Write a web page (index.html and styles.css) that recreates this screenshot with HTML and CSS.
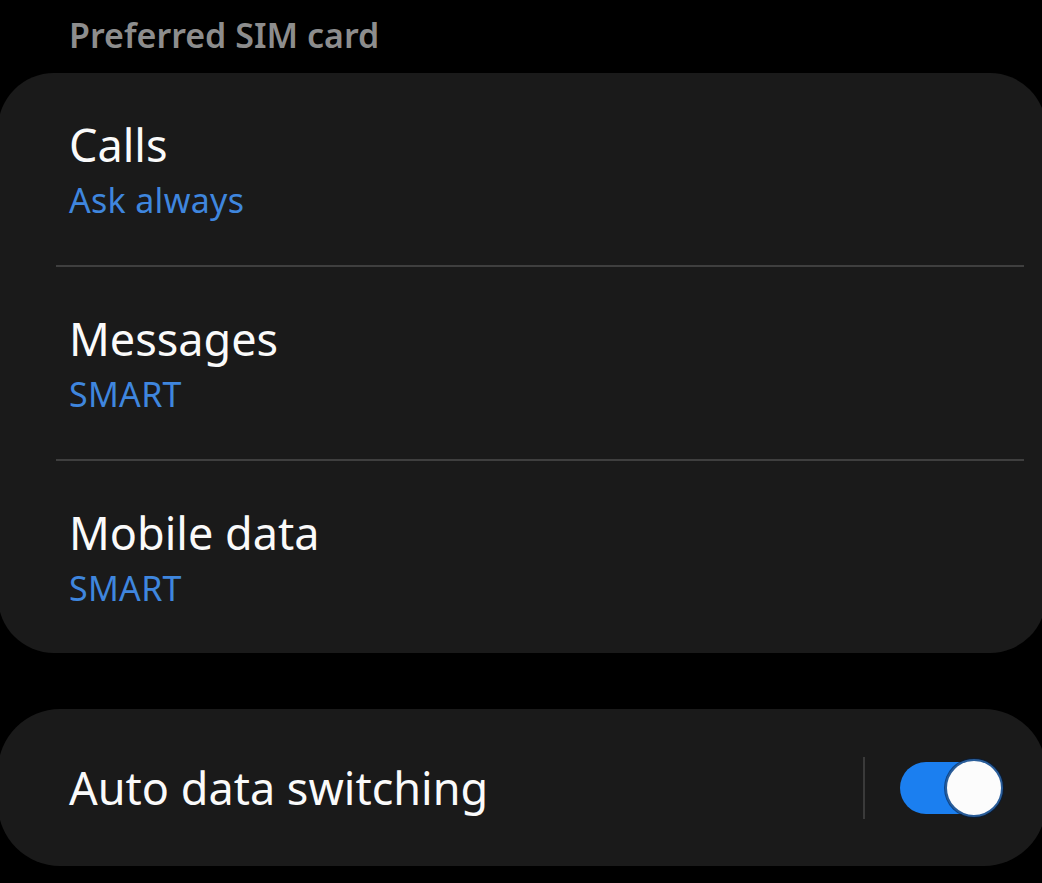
FILE: index.html
```html
<!DOCTYPE html>
<html>
<head>
    <title>SIM card manager</title>
    <meta charset="UTF-8">
    <meta name="viewport" content="width=device-width, initial-scale=1.0">
    <link rel="stylesheet" href="styles.css">
</head>
<body>
    <div class="screen">
        <h2 class="section-title">Preferred SIM card</h2>

        <div class="card">
            <div class="row">
                <div class="row-title">Calls</div>
                <div class="row-value">Ask always</div>
            </div>
            <div class="divider"></div>
            <div class="row">
                <div class="row-title">Messages</div>
                <div class="row-value">SMART</div>
            </div>
            <div class="divider"></div>
            <div class="row">
                <div class="row-title">Mobile data</div>
                <div class="row-value">SMART</div>
            </div>
        </div>

        <div class="card card-switch">
            <div class="row row-switch">
                <div class="row-title">Auto data switching</div>
                <div class="switch-area">
                    <span class="v-sep"></span>
                    <span class="toggle on"><span class="knob"></span></span>
                </div>
            </div>
        </div>
    </div>
</body>
</html>
```

FILE: styles.css
```css
body {
    margin: 0;
    background-color: #000;
    color: #fafafa;
    font-family: 'Noto Sans', 'Roboto', sans-serif;
    overflow: hidden;
}
.screen {
    width: 1042px;
    height: 883px;
    overflow: hidden;
}
.section-title {
    margin: 0;
    padding: 14px 0 0 69px;
    height: 73px;
    box-sizing: border-box;
    font-size: 34px;
    font-weight: 600;
    line-height: 42px;
    color: #8d8d8d;
}
.card {
    margin: 0 -4px 0 -2px;
    background-color: #1a1a1a;
    border-radius: 56px;
}
.row {
    height: 192px;
    padding-left: 71px;
    display: flex;
    flex-direction: column;
    justify-content: center;
}
.row-title {
    font-size: 45px;
    line-height: 56px;
}
.row-value {
    margin-top: 6px;
    font-size: 34px;
    line-height: 42px;
    letter-spacing: 0.3px;
    color: #3f86de;
}
.divider {
    height: 2px;
    margin: 0 22px 0 58px;
    background-color: #3f3f3f;
}
.card-switch {
    margin-top: 56px;
    border-radius: 62px;
}
.row-switch {
    height: 157px;
    flex-direction: row;
    align-items: center;
    justify-content: space-between;
    padding-right: 46px;
}
.switch-area {
    display: flex;
    align-items: center;
}
.v-sep {
    width: 2px;
    height: 62px;
    background-color: #3a3a3a;
    margin-right: 35px;
}
.toggle {
    position: relative;
    width: 100px;
    height: 52px;
    border-radius: 26px;
    background-color: #1b7ff0;
}
.toggle .knob {
    position: absolute;
    top: -3px;
    right: -3px;
    width: 54px;
    height: 54px;
    border-radius: 50%;
    background-color: #fcfcfc;
    border: 2px solid #2a5d99;
    box-shadow: 0 0 0 1px rgba(0, 30, 70, 0.6);
}
```
